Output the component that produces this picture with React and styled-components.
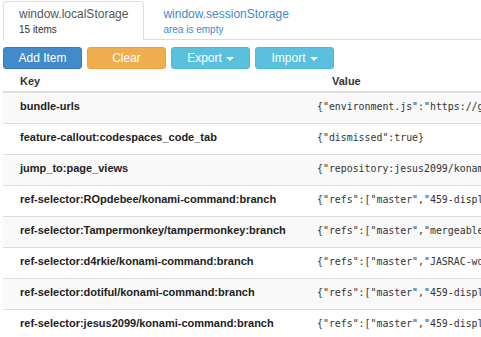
import React from "react";
import styled, { createGlobalStyle } from "styled-components";

const Global = createGlobalStyle`
  html, body { margin: 0; padding: 0; background: #fff; }
  body { font-family: "Liberation Sans", Arial, sans-serif; color: #333; overflow: hidden; }
`;

const Page = styled.div`
  padding: 1px 0 0 3px;
  width: 478px;
  overflow: hidden;
`;

const Tabs = styled.div`
  display: flex;
  border-bottom: 1px solid #ddd;
  height: 38px;
`;

const Tab = styled.div`
  box-sizing: border-box;
  height: 39px;
  margin-bottom: -1px;
  margin-right: 3px;
  padding: 4px 15px 0 15px;
  border: 1px solid ${(p) => (p.$active ? "#ddd" : "transparent")};
  border-bottom-color: transparent;
  border-radius: 4px 4px 0 0;
  background: ${(p) => (p.$active ? "#fff" : "transparent")};
  color: ${(p) => (p.$active ? "#555" : "#428bca")};
`;

const TabTitle = styled.div`
  font-size: 12px;
  line-height: 17px;
  white-space: nowrap;
`;

const TabSub = styled.div`
  font-size: 10px;
  line-height: 13px;
  color: ${(p) => (p.$active ? "#333" : "#428bca")};
`;

const Toolbar = styled.div`
  display: flex;
  gap: 5px;
  margin-top: 7px;
`;

const variants = {
  primary: ["#428bca", "#357ebd"],
  warning: ["#f0ad4e", "#eea236"],
  info: ["#5bc0de", "#46b8da"],
};

const Button = styled.button`
  box-sizing: border-box;
  width: 79px;
  height: 22px;
  padding: 0;
  border-radius: 3px;
  border: 1px solid ${(p) => variants[p.$kind][1]};
  background: ${(p) => variants[p.$kind][0]};
  color: #fff;
  font-family: "Liberation Sans", Arial, sans-serif;
  font-size: 12px;
  line-height: 20px;
  display: flex;
  align-items: center;
  justify-content: center;
  gap: 4px;
`;

const Caret = styled.span`
  width: 0;
  height: 0;
  border-left: 4px solid transparent;
  border-right: 4px solid transparent;
  border-top: 4px solid #fff;
  margin-top: 1px;
`;

const HeadRow = styled.div`
  display: grid;
  grid-template-columns: 321px 1fr;
  height: 22px;
  border-bottom: 2px solid #ddd;
  align-items: center;
  font-size: 11px;
  font-weight: bold;
  color: #333;
  width: 478px;
`;

const HeadCell = styled.div`
  padding-left: ${(p) => p.$pl}px;
  padding-top: 1px;
`;

const Row = styled.div`
  display: grid;
  grid-template-columns: 306px 1fr;
  height: 30px;
  border-bottom: 1px solid #ddd;
  background: ${(p) => (p.$odd ? "#f9f9f9" : "#fff")};
  width: 478px;
  overflow: hidden;
`;

const KeyCell = styled.div`
  padding: 5px 0 0 17px;
  font-size: 11px;
  line-height: 16px;
  font-weight: bold;
  color: #222;
  white-space: nowrap;
`;

const ValueCell = styled.div`
  padding: 6px 0 0 8px;
  font-family: "DejaVu Sans Mono", "Liberation Mono", monospace;
  font-size: 9.9px;
  line-height: 16px;
  color: #333;
  white-space: nowrap;
  overflow: hidden;
`;

const rows = [
  ["bundle-urls", '{"environment.js":"https://github.githubassets.com/'],
  ["feature-callout:codespaces_code_tab", '{"dismissed":true}'],
  ["jump_to:page_views", '{"repository:jesus2099/konami-command":1}'],
  ["ref-selector:ROpdebee/konami-command:branch", '{"refs":["master","459-display"]}'],
  ["ref-selector:Tampermonkey/tampermonkey:branch", '{"refs":["master","mergeable"]}'],
  ["ref-selector:d4rkie/konami-command:branch", '{"refs":["master","JASRAC-works"]}'],
  ["ref-selector:dotiful/konami-command:branch", '{"refs":["master","459-display"]}'],
  ["ref-selector:jesus2099/konami-command:branch", '{"refs":["master","459-display"]}'],
];

export default function App() {
  return (
    <Page>
      <Global />
      <Tabs>
        <Tab $active>
          <TabTitle>window.localStorage</TabTitle>
          <TabSub $active>15 items</TabSub>
        </Tab>
        <Tab>
          <TabTitle>window.sessionStorage</TabTitle>
          <TabSub>area is empty</TabSub>
        </Tab>
      </Tabs>
      <Toolbar>
        <Button $kind="primary">Add Item</Button>
        <Button $kind="warning">Clear</Button>
        <Button $kind="info">
          Export <Caret />
        </Button>
        <Button $kind="info">
          Import <Caret />
        </Button>
      </Toolbar>
      <HeadRow>
        <HeadCell $pl={17}>Key</HeadCell>
        <HeadCell $pl={8}>Value</HeadCell>
      </HeadRow>
      {rows.map(([k, v], i) => (
        <Row key={k} $odd={i % 2 === 0}>
          <KeyCell>{k}</KeyCell>
          <ValueCell>{v}</ValueCell>
        </Row>
      ))}
    </Page>
  );
}
